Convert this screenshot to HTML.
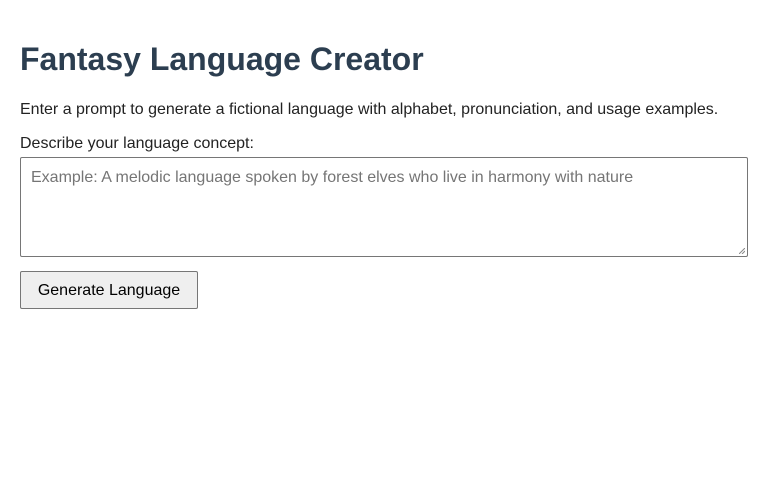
<!DOCTYPE html>
<html><head><meta charset="utf-8"><style>
body{margin:0;background:#fff;font-family:"Liberation Sans",Arial,sans-serif;width:768px;height:480px;overflow:hidden;position:relative}
h1{position:absolute;left:20px;top:41px;margin:0;font-size:32px;line-height:37px;color:#2c3e50;font-weight:bold}
.p{position:absolute;left:20px;top:101px;font-size:16px;line-height:18px;color:#222}
.l{position:absolute;left:20px;top:135px;font-size:16px;line-height:18px;color:#222}
.ta{position:absolute;left:20px;top:157px;width:726px;height:98px;border:1px solid #767676;border-radius:2px}
.ta span{position:absolute;left:10px;top:11px;font-size:16px;line-height:18px;color:#757575}
.rs{position:absolute;right:2px;bottom:2px;width:6px;height:6px}
.b{position:absolute;left:20px;top:271px;width:176px;height:36px;border:1px solid #767676;border-radius:2px;background:#efefef;font-size:16px;line-height:38px;text-align:center;color:#000}
</style></head><body>
<h1>Fantasy Language Creator</h1>
<div class="p">Enter a prompt to generate a fictional language with alphabet, pronunciation, and usage examples.</div>
<div class="l">Describe your language concept:</div>
<div class="ta"><span>Example: A melodic language spoken by forest elves who live in harmony with nature</span>
<svg class="rs" viewBox="0 0 6 6"><path d="M0 6L6 0M3 6L6 3" stroke="#888" stroke-width="1"/></svg></div>
<div class="b">Generate Language</div>
</body></html>
